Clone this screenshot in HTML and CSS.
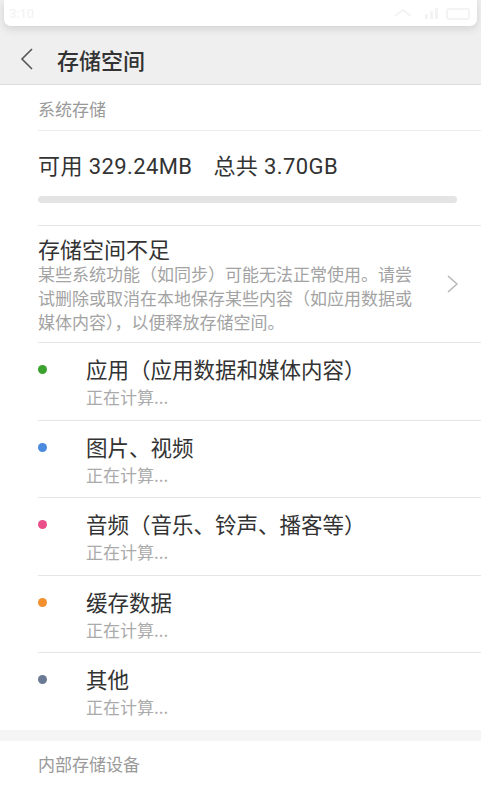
FILE: index.html
```html
<!DOCTYPE html>
<html lang="zh-CN">
<head>
<meta charset="utf-8">
<link rel="stylesheet" href="styles.css">
</head>
<body>
<div class="top">
  <div class="notice">
    <span class="notice-time">3:10</span>
    <span class="notice-icons">
      <svg width="80" height="14" viewBox="0 0 80 14"><path d="M2 10 L10 4 L18 10" fill="none" stroke="#f3f3f3" stroke-width="2"/><rect x="32" y="8" width="3" height="5" fill="#f3f3f3"/><rect x="37" y="5" width="3" height="8" fill="#f3f3f3"/><rect x="42" y="2" width="3" height="11" fill="#f3f3f3"/><rect x="54" y="3" width="22" height="10" rx="2" fill="none" stroke="#f3f3f3" stroke-width="2"/></svg>
    </span>
  </div>
  <div class="appbar">
    <svg class="back" width="14" height="22" viewBox="0 0 14 22"><path d="M12 1 L2 11 L12 21" fill="none" stroke="#555" stroke-width="1.6"/></svg>
    <span class="title">存储空间</span>
  </div>
</div>

<div class="section">
  <div class="label label-first">系统存储</div>
  <div class="summary">
    <div class="summary-text"><span>可用 329.24MB</span><span class="total">总共 3.70GB</span></div>
    <div class="bar"></div>
  </div>
  <div class="warning">
    <div class="warning-body">
      <div class="warning-title">存储空间不足</div>
      <div class="warning-desc">某些系统功能（如同步）可能无法正常使用。请尝试删除或取消在本地保存某些内容（如应用数据或媒体内容），以便释放存储空间。</div>
    </div>
    <svg class="chev" width="12" height="18" viewBox="0 0 12 18"><path d="M1 1 L10 9 L1 17" fill="none" stroke="#b5b5b5" stroke-width="1.4"/></svg>
  </div>
  <div class="item">
    <span class="dot green"></span>
    <div class="item-text"><div class="item-title">应用（应用数据和媒体内容）</div><div class="item-sub">正在计算...</div></div>
  </div>
  <div class="item">
    <span class="dot blue"></span>
    <div class="item-text"><div class="item-title">图片、视频</div><div class="item-sub">正在计算...</div></div>
  </div>
  <div class="item">
    <span class="dot pink"></span>
    <div class="item-text"><div class="item-title">音频（音乐、铃声、播客等）</div><div class="item-sub">正在计算...</div></div>
  </div>
  <div class="item">
    <span class="dot orange"></span>
    <div class="item-text"><div class="item-title">缓存数据</div><div class="item-sub">正在计算...</div></div>
  </div>
  <div class="item last">
    <span class="dot gray"></span>
    <div class="item-text"><div class="item-title">其他</div><div class="item-sub">正在计算...</div></div>
  </div>
</div>
<div class="gap"></div>
<div class="section">
  <div class="label">内部存储设备</div>
</div>
</body>
</html>
```

FILE: styles.css
```css
html, body {
  margin: 0;
  padding: 0;
  background: #ffffff;
  font-family: "Noto Sans CJK SC", "Noto Sans", sans-serif;
  color: #333;
}
body { width: 481px; height: 785px; overflow: hidden; }

.top {
  background: #efefef;
  border-bottom: 1px solid #dcdcdc;
}
.notice {
  height: 26px;
  margin: 0 4px;
  background: #fff;
  border-radius: 0 0 7px 7px;
  box-shadow: 0 3px 8px rgba(0,0,0,0.12);
  display: flex;
  align-items: center;
  justify-content: space-between;
  padding: 0 4px 0 5px;
}
.notice-time { font-size: 13px; color: #f2f2f2; font-family: "Roboto", sans-serif; }
.notice-icons { display: flex; align-items: center; }

.appbar {
  height: 51px;
  padding-top: 7px;
  display: flex;
  align-items: center;
}
.back { margin-left: 20px; }
.title {
  margin-left: 23px;
  font-size: 22px;
  font-weight: 500;
  color: #333;
}

.label {
  height: 45px;
  display: flex;
  align-items: center;
  padding-left: 38px;
  font-size: 17px;
  color: #999;
}
.label-first { height: 44px; padding-top: 1px; }

.summary {
  margin-left: 38px;
  padding: 21px 0 22px 0;
  border-top: 1px solid #ececec;
  border-bottom: 1px solid #e6e6e6;
}
.summary-text {
  font-family: "Roboto", "Noto Sans CJK SC", sans-serif;
  font-size: 22px;
  letter-spacing: 0.4px;
  line-height: 30px;
  color: #333;
  display: flex;
  gap: 21px;
}
.bar {
  margin-top: 14px;
  width: 419px;
  height: 7px;
  border-radius: 4px;
  background: #e4e4e4;
}

.warning {
  margin-left: 38px;
  padding: 8px 0;
  border-bottom: 1px solid #e6e6e6;
  display: flex;
  align-items: center;
}
.warning-body { width: 390px; }
.warning-title { font-size: 22px; line-height: 28px; color: #333; }
.warning-desc { font-size: 17px; line-height: 24px; color: #a3a3a3; }
.chev { margin-left: 19px; }

.item {
  margin-left: 38px;
  padding: 12px 0 10.5px 0;
  border-bottom: 1px solid #e6e6e6;
  display: flex;
  align-items: flex-start;
}
.item.last { border-bottom: none; }
.dot {
  width: 9px;
  height: 9px;
  border-radius: 50%;
  margin-top: 10px;
  margin-right: 39px;
  flex: none;
}
.green { background: #3ba22f; }
.blue { background: #4a8be0; }
.pink { background: #ea4f8c; }
.orange { background: #f38f2c; }
.gray { background: #6b7a94; }
.item-title { font-size: 21.5px; line-height: 28px; color: #333; }
.item-sub { margin-top: 2px; font-size: 17px; line-height: 24px; color: #aaa; }

.gap { height: 11px; background: #f5f5f5; }
```
